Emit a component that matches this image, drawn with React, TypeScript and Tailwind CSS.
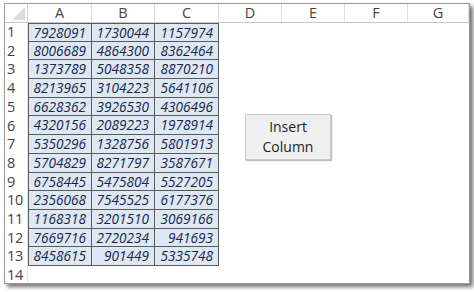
import React from "react";

const data: string[][] = [
  ["7928091", "1730044", "1157974"],
  ["8006689", "4864300", "8362464"],
  ["1373789", "5048358", "8870210"],
  ["8213965", "3104223", "5641106"],
  ["6628362", "3926530", "4306496"],
  ["4320156", "2089223", "1978914"],
  ["5350296", "1328756", "5801913"],
  ["5704829", "8271797", "3587671"],
  ["6758445", "5475804", "5527205"],
  ["2356068", "7545525", "6177376"],
  ["1168318", "3201510", "3069166"],
  ["7669716", "2720234", "941693"],
  ["8458615", "901449", "5335748"],
];

const cols = ["A", "B", "C", "D", "E", "F", "G"];
const grid = "grid grid-cols-[23px_64px_63px_64px_63px_63px_63px_61px]";
const font = { fontFamily: "'Open Sans', 'Noto Sans', sans-serif" };

export default function App() {
  return (
    <div className="w-[474px] h-[292px] bg-white relative overflow-hidden" style={font}>
      <div className="absolute left-[4px] top-[3px] w-[466px] h-[281px] border border-[#9a9a9a] bg-white shadow-[3px_3px_4px_rgba(0,0,0,0.55)] overflow-hidden">
        {/* header row */}
        <div className={`${grid} h-[19px] border-b border-[#c8c8c8] bg-white`}>
          <div className="relative border-r border-[#d8d8d8]">
            <div className="absolute right-[2px] bottom-[2px] w-0 h-0 border-l-[13px] border-l-transparent border-b-[13px] border-b-[#dcdcdc]" />
          </div>
          {cols.map((c) => (
            <div
              key={c}
              className="flex items-center justify-center text-[14.5px] text-[#444] border-r border-[#dedede] leading-none"
            >
              {c}
            </div>
          ))}
        </div>
        {/* data rows */}
        {data.map((row, i) => (
          <div key={i} className={`${grid} h-[18.7px]`}>
            <div className="flex items-center pl-[2px] text-[14.5px] text-[#444] leading-none border-r border-[#e4e4e4] tracking-[-0.3px]">
              {i + 1}
            </div>
            {row.map((v, j) => (
              <div
                key={j}
                className={`flex items-center justify-end pr-[5px] bg-[#dde8f3] border-[#5a5a5a] border-b border-r ${
                  i === 0 ? "border-t" : ""
                } ${j === 0 ? "border-l" : ""} italic text-[13.6px] text-[#16244c] leading-none`}
              >
                {v}
              </div>
            ))}
            <div />
            <div />
            <div />
            <div />
          </div>
        ))}
        <div className={`${grid} h-[18.7px]`}>
          <div className="flex items-center pl-[2px] text-[14.5px] text-[#444] leading-none border-r border-[#e4e4e4] tracking-[-0.3px]">
            14
          </div>
        </div>
      </div>
      {/* button */}
      <div className="absolute left-[245px] top-[114px] w-[86px] h-[46px] bg-[#f0f0f0] border border-[#c9c9c9] shadow-[1px_1px_1px_rgba(0,0,0,0.25)] flex flex-col items-center justify-center text-[14px] leading-[20px] text-[#222]">
        <span>Insert</span>
        <span>Column</span>
      </div>
    </div>
  );
}
